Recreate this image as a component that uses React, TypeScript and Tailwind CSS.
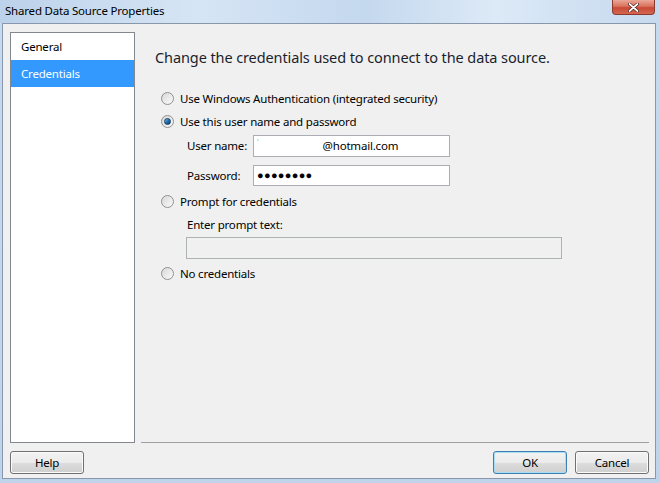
import React from 'react'

const font = { fontFamily: '"Segoe UI", "Noto Sans", "Open Sans", sans-serif' }

const Radio = ({ checked }: { checked?: boolean }) => (
  <span className="w-[13px] h-[13px] rounded-full border border-[#8f9191] bg-gradient-to-br from-[#d8d8d8] to-[#fbfbfb] flex items-center justify-center shrink-0">
    {checked && (
      <span className="w-[7px] h-[7px] rounded-full bg-gradient-to-br from-[#7cc4f0] via-[#1d6fb0] to-[#0d3f73] border border-[#123b63]" />
    )}
  </span>
)

const RadioRow = ({ label, checked }: { label: string; checked?: boolean }) => (
  <div className="flex items-center h-[23px] pl-[20px] gap-[6px]">
    <Radio checked={checked} />
    <span className="text-[11.5px] tracking-[-0.2px] text-black">{label}</span>
  </div>
)

const WinButton = ({ label, primary, className }: { label: string; primary?: boolean; className?: string }) => (
  <button
    className={`h-[23px] w-[74px] rounded-[3px] border text-[11.5px] tracking-[-0.2px] text-black bg-[linear-gradient(#f2f2f2_0%,#ebebeb_50%,#dddddd_50%,#cfcfcf_100%)] ${
      primary ? 'border-[#3c7fb1] shadow-[inset_0_0_0_1px_#a9dcf5]' : 'border-[#707070] shadow-[inset_0_0_0_1px_#fbfbfb]'
    } ${className || ''}`}
  >
    {label}
  </button>
)

export default function App() {
  return (
    <div
      className="w-[660px] h-[483px] flex flex-col bg-gradient-to-b from-[#c6daf0] to-[#bfd3ea] overflow-hidden"
      style={font}
    >
      {/* Title bar */}
      <div className="relative h-[23px] shrink-0 flex items-center pl-[5px] bg-[linear-gradient(90deg,#bcd2ea_0%,#d6e5f5_30%,#c4d8ee_55%,#dce9f7_75%,#c6d9ee_100%)]">
        <span className="text-[11.5px] tracking-[-0.2px] text-black -mt-[2px]">Shared Data Source Properties</span>
        <div className="absolute right-[5px] top-0 w-[43px] h-[15px] rounded-b-[4px] border border-t-0 border-[#8a3a2e] bg-[linear-gradient(#eaa897_0%,#d9725d_45%,#c84a36_55%,#d5664f_100%)] flex items-center justify-center">
          <svg width="11" height="9" viewBox="0 0 11 9">
            <path d="M1.5 1 L9.5 8 M9.5 1 L1.5 8" stroke="#3e1a14" strokeWidth="3" strokeLinecap="round" />
            <path d="M1.5 1 L9.5 8 M9.5 1 L1.5 8" stroke="#ffffff" strokeWidth="1.7" strokeLinecap="round" />
          </svg>
        </div>
      </div>

      {/* Client area */}
      <div className="flex-1 ml-[2px] mr-[4px] mb-[4px] border border-[#8897ac] bg-[#f0f0f0] flex flex-col pt-[8px] pl-[7px] pr-[6px]">
        <div className="flex h-[411px] gap-[6px]">
          {/* Left list */}
          <div className="w-[125px] h-full border border-[#828790] bg-white">
            <div className="h-[27px] flex items-center pl-[10px] text-[11.5px] tracking-[-0.2px] text-black">General</div>
            <div className="h-[27px] flex items-center pl-[10px] text-[11.5px] tracking-[-0.2px] text-white bg-[#3399ff]">Credentials</div>
          </div>

          {/* Right panel */}
          <div className="flex-1 h-full border-b border-[#a0a0a0] flex flex-col">
            <div className="mt-[15px] pl-[14px] h-[20px] leading-[20px] text-[14.5px] tracking-[-0.1px] text-[#1a1f2e]">
              Change the credentials used to connect to the data source.
            </div>
            <div className="mt-[20px]">
              <RadioRow label="Use Windows Authentication (integrated security)" />
              <RadioRow label="Use this user name and password" checked />
              <div className="flex items-center mt-[2px] pl-[46px]">
                <span className="w-[66px] text-[11.5px] tracking-[-0.2px] text-black">User name:</span>
                <div className="w-[197px] h-[22px] border border-[#abadb3] bg-white flex items-center pl-[3px] text-[11.5px] tracking-[-0.2px] text-black">
                  <span className="text-[#b0b0b0] text-[8px] -mt-[6px]">'</span>
                  <span className="ml-[64px]">@hotmail.com</span>
                </div>
              </div>
              <div className="flex items-center mt-[8px] pl-[46px]">
                <span className="w-[66px] text-[11.5px] tracking-[-0.2px] text-black">Password:</span>
                <div className="w-[197px] h-[21px] border border-[#abadb3] bg-white flex items-center pl-[3px] text-[11px] tracking-[0.3px] text-black">
                  ●●●●●●●●
                </div>
              </div>
              <div className="mt-[4px]">
                <RadioRow label="Prompt for credentials" />
              </div>
              <div className="mt-[4px] h-[16px] flex items-center pl-[46px] text-[11.5px] tracking-[-0.2px] text-black">Enter prompt text:</div>
              <div className="mt-[4px] ml-[45px] w-[376px] h-[22px] border border-[#adb2b5] bg-[#f0f0f0]" />
              <div className="mt-[3px]">
                <RadioRow label="No credentials" />
              </div>
            </div>
          </div>
        </div>

        {/* Buttons */}
        <div className="flex items-center mt-[8px]">
          <WinButton label="Help" />
          <div className="flex-1" />
          <WinButton label="OK" primary />
          <WinButton label="Cancel" className="ml-[8px]" />
        </div>
      </div>
    </div>
  )
}
